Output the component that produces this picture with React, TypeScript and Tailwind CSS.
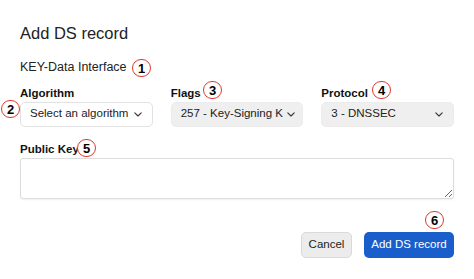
import React from "react";

const font = { fontFamily: '"Liberation Sans", Arial, sans-serif' };

function Marker({ n, className }: { n: number; className: string }) {
  return (
    <span
      className={`absolute flex h-[18px] w-[19px] items-center justify-center rounded-full border-[1.5px] border-[#de3a2c] bg-white text-[13px] font-bold leading-none text-black ${className}`}
    >
      {n}
    </span>
  );
}

function Chevron() {
  return (
    <svg width="8" height="5" viewBox="0 0 8 5" className="shrink-0">
      <path d="M0.8 0.8 L4 4 L7.2 0.8" fill="none" stroke="#333" strokeWidth="1.1" strokeLinecap="round" strokeLinejoin="round" />
    </svg>
  );
}

function SelectBox({ value, muted }: { value: string; muted?: boolean }) {
  return (
    <div
      className={`flex h-[25px] items-center justify-between gap-1 rounded-[5px] border pl-[9px] pr-[10px] text-[11.5px] text-[#222] ${
        muted ? "border-[#ececec] bg-[#efefef]" : "border-[#e2e2e2] bg-white"
      }`}
    >
      <span className="whitespace-nowrap">{value}</span>
      <Chevron />
    </div>
  );
}

export default function App() {
  return (
    <div className="relative h-[279px] w-[474px] overflow-hidden bg-white px-5 text-[#222]" style={font}>
      <h1 className="pt-[25px] text-[16.5px] leading-none font-normal">Add DS record</h1>
      <p className="mt-[19px] text-[12.5px] leading-none">KEY-Data Interface</p>

      <div className="mt-[15px] grid grid-cols-3 gap-x-[18px]">
        <div>
          <label className="block text-[11.5px] leading-none font-bold text-[#111]">Algorithm</label>
          <div className="mt-[2px]">
            <SelectBox value="Select an algorithm" />
          </div>
        </div>
        <div>
          <label className="block text-[11.5px] leading-none font-bold text-[#111]">Flags</label>
          <div className="mt-[2px]">
            <SelectBox value="257 - Key-Signing K" muted />
          </div>
        </div>
        <div>
          <label className="block text-[11.5px] leading-none font-bold text-[#111]">Protocol</label>
          <div className="mt-[2px]">
            <SelectBox value="3 - DNSSEC" muted />
          </div>
        </div>
      </div>

      <label className="mt-[17px] block text-[11.5px] leading-none font-bold text-[#111]">Public Key</label>
      <textarea className="mt-[3px] block h-[41px] w-full rounded-[3px] border border-[#dcdcdc] bg-white shadow-[0_1px_2px_rgba(0,0,0,0.06)] outline-none" />

      <div className="mt-[33px] flex justify-end gap-[12px]">
        <button className="h-[26px] w-[51px] rounded-[5px] border border-[#d9d9d9] bg-[#ececec] text-[11.5px] text-[#222]">
          Cancel
        </button>
        <button className="h-[26px] w-[90px] rounded-[5px] bg-[#1a5ecb] text-[11.5px] text-white">
          Add DS record
        </button>
      </div>

      <Marker n={1} className="left-[132px] top-[59px]" />
      <Marker n={2} className="left-[1px] top-[100px]" />
      <Marker n={3} className="left-[203px] top-[81px]" />
      <Marker n={4} className="left-[372px] top-[81px]" />
      <Marker n={5} className="left-[77px] top-[139px]" />
      <Marker n={6} className="left-[425px] top-[211px]" />
    </div>
  );
}
